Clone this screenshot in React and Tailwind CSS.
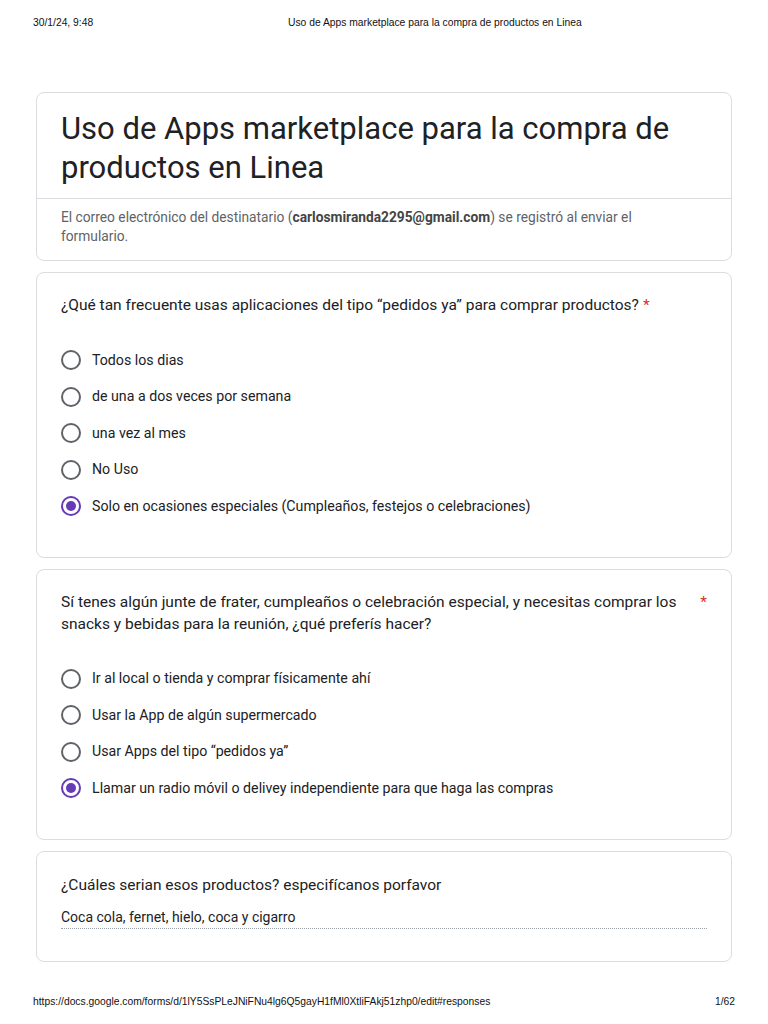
import React from 'react';

const Radio = ({ checked }) => (
  <span
    className={`flex h-[20px] w-[20px] shrink-0 items-center justify-center rounded-full border-2 ${
      checked ? 'border-[#673ab7]' : 'border-[#5f6368]'
    }`}
  >
    {checked && <span className="h-[10px] w-[10px] rounded-full bg-[#673ab7]" />}
  </span>
);

const Option = ({ label, checked }) => (
  <div className="flex h-[36.5px] items-center gap-[11px]">
    <Radio checked={checked} />
    <span className="text-[14.2px] text-[#202124]">{label}</span>
  </div>
);

const Question = ({ text, required }) => (
  <div className="flex items-start gap-[4px] text-[15.5px] leading-[22px] text-[#202124]">
    <span>{text}</span>
    {required && <span className="shrink-0 text-[#d93025]">*</span>}
  </div>
);

const Card = ({ children, className = '' }) => (
  <div className={`rounded-[8px] border border-[#dadce0] bg-white ${className}`}>{children}</div>
);

const App = () => {
  const q1 = [
    'Todos los dias',
    'de una a dos veces por semana',
    'una vez al mes',
    'No Uso',
    'Solo en ocasiones especiales (Cumpleaños, festejos o celebraciones)',
  ];
  const q2 = [
    'Ir al local o tienda y comprar físicamente ahí',
    'Usar la App de algún supermercado',
    'Usar Apps del tipo “pedidos ya”',
    'Llamar un radio móvil o delivey independiente para que haga las compras',
  ];

  return (
    <div className="flex h-[1024px] w-[768px] flex-col bg-white" style={{ fontFamily: 'Roboto, "Liberation Sans", sans-serif' }}>
      <div className="flex h-[46px] shrink-0 items-center px-[33px] text-[10.3px] text-[#111]" style={{ fontFamily: '"Liberation Sans", Arial, sans-serif' }}>
        <span className="w-[255px] shrink-0">30/1/24, 9:48</span>
        <span>Uso de Apps marketplace para la compra de productos en Linea</span>
      </div>

      <div className="mx-[36px] mt-[46px] flex flex-col gap-[11px]">
        <Card>
          <div className="border-b border-[#dadce0] px-[24px] pb-[11px] pt-[16px] text-[31px] leading-[39px] text-[#202124]">
            Uso de Apps marketplace para la compra de productos en Linea
          </div>
          <p className="pb-[14px] pl-[24px] pr-[50px] pt-[9px] text-[13.75px] leading-[19px] text-[#5f6368]">
            El correo electrónico del destinatario (<b className="font-bold text-[#444]">carlosmiranda2295@gmail.com</b>) se registró al enviar el formulario.
          </p>
        </Card>

        <Card className="px-[24px] pb-[32px] pt-[21px]">
          <Question text="¿Qué tan frecuente usas aplicaciones del tipo “pedidos ya” para comprar productos?" required />
          <div className="mt-[26px] flex flex-col">
            {q1.map((o, i) => (
              <Option key={o} label={o} checked={i === 4} />
            ))}
          </div>
        </Card>

        <Card className="px-[24px] pb-[32px] pt-[21px]">
          <Question text="Sí tenes algún junte de frater, cumpleaños o celebración especial, y necesitas comprar los snacks y bebidas para la reunión, ¿qué preferís hacer?" required />
          <div className="mt-[26px] flex flex-col">
            {q2.map((o, i) => (
              <Option key={o} label={o} checked={i === 3} />
            ))}
          </div>
        </Card>

        <Card className="px-[24px] pb-[32px] pt-[22px]">
          <Question text="¿Cuáles serian esos productos? especifícanos porfavor" />
          <div className="mt-[12px] border-b border-dotted border-[#9aa0a6] pb-[1px] text-[14px] leading-[19px] text-[#202124]">
            Coca cola, fernet, hielo, coca y cigarro
          </div>
        </Card>
      </div>

      <div className="mt-auto flex h-[30px] shrink-0 items-start justify-between px-[33px] text-[10.3px] text-[#111]" style={{ fontFamily: '"Liberation Sans", Arial, sans-serif' }}>
        <span>https://docs.google.com/forms/d/1lY5SsPLeJNiFNu4lg6Q5gayH1fMl0XtliFAkj51zhp0/edit#responses</span>
        <span>1/62</span>
      </div>
    </div>
  );
};

export default App;
